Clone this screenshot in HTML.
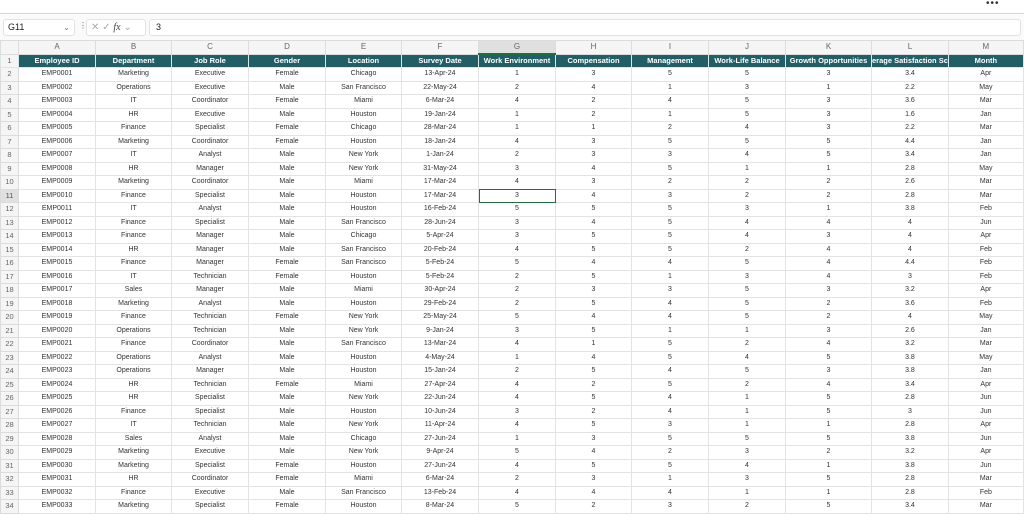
<!DOCTYPE html>
<html><head><meta charset="utf-8"><style>
*{margin:0;padding:0;box-sizing:border-box}
body{width:1024px;height:515px;overflow:hidden;background:#fff;font-family:"Liberation Sans",sans-serif;position:relative}
#top{position:absolute;left:0;top:0;width:1024px;height:14px;background:#fff;border-bottom:1px solid #d4d4d4}
#top span{position:absolute;left:986px;top:-2px;font-size:10px;letter-spacing:1px;color:#333}
#fb{position:absolute;left:0;top:15px;width:1024px;height:25px;background:#fafafa}
.nb{position:absolute;left:3px;top:4px;width:72px;height:17px;background:#fff;border:1px solid #e2e2e2;border-radius:3px;font-size:9px;line-height:15px;padding-left:4px;color:#222}
.nb i{position:absolute;right:4px;top:0;font-style:normal;color:#777;font-size:8px}
.fx{position:absolute;left:86px;top:4px;width:60px;height:17px;background:#fff;border:1px solid #e2e2e2;border-radius:3px;font-size:10px;color:#aaa;line-height:15px;padding-left:4px}
.fx b{font-family:"Liberation Serif",serif;font-style:italic;color:#444;font-weight:normal}
.fi{position:absolute;left:149px;top:4px;width:872px;height:17px;background:#fff;border:1px solid #e2e2e2;border-radius:3px;font-size:9px;line-height:15px;padding-left:6px;color:#222}
table{position:absolute;left:0;top:40px;border-collapse:collapse;table-layout:fixed}
td{border:1px solid #e3e3e3;font-size:7px;color:#333;text-align:center;white-space:nowrap;overflow:hidden;height:13.5px;padding:0;line-height:12px}
tr.ch td{background:#f5f5f5;color:#666;font-size:8px;height:13px;border-color:#dcdcdc}
tr.ch td.sel{background:#e0e0e0;border-bottom:2px solid #1f6f3f}
td.rn{background:#f5f5f5;color:#666;font-size:7.5px;border-color:#dcdcdc}
td.rs{background:#e0e0e0;color:#1f6f3f}
tr.h td{background:#215e66;color:#fff;font-weight:bold;font-size:7.5px;border-color:#d8e6e6}
tr.h td.rn{background:#f5f5f5;color:#666;font-weight:normal}
td.act{outline:1.5px solid #1f6f3f;outline-offset:-1px}
</style></head><body>
<div id="top"><span>•••</span></div>
<div id="fb"><div class="nb">G11<i>⌄</i></div><div style="position:absolute;left:79px;top:6px;font-size:8px;color:#666">⋮</div><div class="fx">✕ ✓ <b>fx</b> ⌄</div><div class="fi">3</div></div>
<table>
<colgroup><col style="width:18px"><col style="width:77px"><col style="width:76px"><col style="width:77px"><col style="width:77px"><col style="width:76px"><col style="width:77px"><col style="width:77px"><col style="width:76px"><col style="width:77px"><col style="width:77px"><col style="width:86px"><col style="width:76px"><col style="width:75px"></colgroup>
<tr class="ch"><td class="rn"></td><td>A</td><td>B</td><td>C</td><td>D</td><td>E</td><td>F</td><td class="sel">G</td><td>H</td><td>I</td><td>J</td><td>K</td><td>L</td><td>M</td></tr>
<tr class="h"><td class="rn">1</td><td>Employee ID</td><td>Department</td><td>Job Role</td><td>Gender</td><td>Location</td><td>Survey Date</td><td>Work Environment</td><td>Compensation</td><td>Management</td><td>Work-Life Balance</td><td>Growth Opportunities</td><td style="text-align:right">erage Satisfaction Sc</td><td>Month</td></tr>
<tr><td class="rn">2</td><td>EMP0001</td><td>Marketing</td><td>Executive</td><td>Female</td><td>Chicago</td><td>13-Apr-24</td><td>1</td><td>3</td><td>5</td><td>5</td><td>3</td><td>3.4</td><td>Apr</td></tr>
<tr><td class="rn">3</td><td>EMP0002</td><td>Operations</td><td>Executive</td><td>Male</td><td>San Francisco</td><td>22-May-24</td><td>2</td><td>4</td><td>1</td><td>3</td><td>1</td><td>2.2</td><td>May</td></tr>
<tr><td class="rn">4</td><td>EMP0003</td><td>IT</td><td>Coordinator</td><td>Female</td><td>Miami</td><td>6-Mar-24</td><td>4</td><td>2</td><td>4</td><td>5</td><td>3</td><td>3.6</td><td>Mar</td></tr>
<tr><td class="rn">5</td><td>EMP0004</td><td>HR</td><td>Executive</td><td>Male</td><td>Houston</td><td>19-Jan-24</td><td>1</td><td>2</td><td>1</td><td>5</td><td>3</td><td>1.6</td><td>Jan</td></tr>
<tr><td class="rn">6</td><td>EMP0005</td><td>Finance</td><td>Specialist</td><td>Female</td><td>Chicago</td><td>28-Mar-24</td><td>1</td><td>1</td><td>2</td><td>4</td><td>3</td><td>2.2</td><td>Mar</td></tr>
<tr><td class="rn">7</td><td>EMP0006</td><td>Marketing</td><td>Coordinator</td><td>Female</td><td>Houston</td><td>18-Jan-24</td><td>4</td><td>3</td><td>5</td><td>5</td><td>5</td><td>4.4</td><td>Jan</td></tr>
<tr><td class="rn">8</td><td>EMP0007</td><td>IT</td><td>Analyst</td><td>Male</td><td>New York</td><td>1-Jan-24</td><td>2</td><td>3</td><td>3</td><td>4</td><td>5</td><td>3.4</td><td>Jan</td></tr>
<tr><td class="rn">9</td><td>EMP0008</td><td>HR</td><td>Manager</td><td>Male</td><td>New York</td><td>31-May-24</td><td>3</td><td>4</td><td>5</td><td>1</td><td>1</td><td>2.8</td><td>May</td></tr>
<tr><td class="rn">10</td><td>EMP0009</td><td>Marketing</td><td>Coordinator</td><td>Male</td><td>Miami</td><td>17-Mar-24</td><td>4</td><td>3</td><td>2</td><td>2</td><td>2</td><td>2.6</td><td>Mar</td></tr>
<tr><td class="rn rs">11</td><td>EMP0010</td><td>Finance</td><td>Specialist</td><td>Male</td><td>Houston</td><td>17-Mar-24</td><td class="act">3</td><td>4</td><td>3</td><td>2</td><td>2</td><td>2.8</td><td>Mar</td></tr>
<tr><td class="rn">12</td><td>EMP0011</td><td>IT</td><td>Analyst</td><td>Male</td><td>Houston</td><td>16-Feb-24</td><td>5</td><td>5</td><td>5</td><td>3</td><td>1</td><td>3.8</td><td>Feb</td></tr>
<tr><td class="rn">13</td><td>EMP0012</td><td>Finance</td><td>Specialist</td><td>Male</td><td>San Francisco</td><td>28-Jun-24</td><td>3</td><td>4</td><td>5</td><td>4</td><td>4</td><td>4</td><td>Jun</td></tr>
<tr><td class="rn">14</td><td>EMP0013</td><td>Finance</td><td>Manager</td><td>Male</td><td>Chicago</td><td>5-Apr-24</td><td>3</td><td>5</td><td>5</td><td>4</td><td>3</td><td>4</td><td>Apr</td></tr>
<tr><td class="rn">15</td><td>EMP0014</td><td>HR</td><td>Manager</td><td>Male</td><td>San Francisco</td><td>20-Feb-24</td><td>4</td><td>5</td><td>5</td><td>2</td><td>4</td><td>4</td><td>Feb</td></tr>
<tr><td class="rn">16</td><td>EMP0015</td><td>Finance</td><td>Manager</td><td>Female</td><td>San Francisco</td><td>5-Feb-24</td><td>5</td><td>4</td><td>4</td><td>5</td><td>4</td><td>4.4</td><td>Feb</td></tr>
<tr><td class="rn">17</td><td>EMP0016</td><td>IT</td><td>Technician</td><td>Female</td><td>Houston</td><td>5-Feb-24</td><td>2</td><td>5</td><td>1</td><td>3</td><td>4</td><td>3</td><td>Feb</td></tr>
<tr><td class="rn">18</td><td>EMP0017</td><td>Sales</td><td>Manager</td><td>Male</td><td>Miami</td><td>30-Apr-24</td><td>2</td><td>3</td><td>3</td><td>5</td><td>3</td><td>3.2</td><td>Apr</td></tr>
<tr><td class="rn">19</td><td>EMP0018</td><td>Marketing</td><td>Analyst</td><td>Male</td><td>Houston</td><td>29-Feb-24</td><td>2</td><td>5</td><td>4</td><td>5</td><td>2</td><td>3.6</td><td>Feb</td></tr>
<tr><td class="rn">20</td><td>EMP0019</td><td>Finance</td><td>Technician</td><td>Female</td><td>New York</td><td>25-May-24</td><td>5</td><td>4</td><td>4</td><td>5</td><td>2</td><td>4</td><td>May</td></tr>
<tr><td class="rn">21</td><td>EMP0020</td><td>Operations</td><td>Technician</td><td>Male</td><td>New York</td><td>9-Jan-24</td><td>3</td><td>5</td><td>1</td><td>1</td><td>3</td><td>2.6</td><td>Jan</td></tr>
<tr><td class="rn">22</td><td>EMP0021</td><td>Finance</td><td>Coordinator</td><td>Male</td><td>San Francisco</td><td>13-Mar-24</td><td>4</td><td>1</td><td>5</td><td>2</td><td>4</td><td>3.2</td><td>Mar</td></tr>
<tr><td class="rn">23</td><td>EMP0022</td><td>Operations</td><td>Analyst</td><td>Male</td><td>Houston</td><td>4-May-24</td><td>1</td><td>4</td><td>5</td><td>4</td><td>5</td><td>3.8</td><td>May</td></tr>
<tr><td class="rn">24</td><td>EMP0023</td><td>Operations</td><td>Manager</td><td>Male</td><td>Houston</td><td>15-Jan-24</td><td>2</td><td>5</td><td>4</td><td>5</td><td>3</td><td>3.8</td><td>Jan</td></tr>
<tr><td class="rn">25</td><td>EMP0024</td><td>HR</td><td>Technician</td><td>Female</td><td>Miami</td><td>27-Apr-24</td><td>4</td><td>2</td><td>5</td><td>2</td><td>4</td><td>3.4</td><td>Apr</td></tr>
<tr><td class="rn">26</td><td>EMP0025</td><td>HR</td><td>Specialist</td><td>Male</td><td>New York</td><td>22-Jun-24</td><td>4</td><td>5</td><td>4</td><td>1</td><td>5</td><td>2.8</td><td>Jun</td></tr>
<tr><td class="rn">27</td><td>EMP0026</td><td>Finance</td><td>Specialist</td><td>Male</td><td>Houston</td><td>10-Jun-24</td><td>3</td><td>2</td><td>4</td><td>1</td><td>5</td><td>3</td><td>Jun</td></tr>
<tr><td class="rn">28</td><td>EMP0027</td><td>IT</td><td>Technician</td><td>Male</td><td>New York</td><td>11-Apr-24</td><td>4</td><td>5</td><td>3</td><td>1</td><td>1</td><td>2.8</td><td>Apr</td></tr>
<tr><td class="rn">29</td><td>EMP0028</td><td>Sales</td><td>Analyst</td><td>Male</td><td>Chicago</td><td>27-Jun-24</td><td>1</td><td>3</td><td>5</td><td>5</td><td>5</td><td>3.8</td><td>Jun</td></tr>
<tr><td class="rn">30</td><td>EMP0029</td><td>Marketing</td><td>Executive</td><td>Male</td><td>New York</td><td>9-Apr-24</td><td>5</td><td>4</td><td>2</td><td>3</td><td>2</td><td>3.2</td><td>Apr</td></tr>
<tr><td class="rn">31</td><td>EMP0030</td><td>Marketing</td><td>Specialist</td><td>Female</td><td>Houston</td><td>27-Jun-24</td><td>4</td><td>5</td><td>5</td><td>4</td><td>1</td><td>3.8</td><td>Jun</td></tr>
<tr><td class="rn">32</td><td>EMP0031</td><td>HR</td><td>Coordinator</td><td>Female</td><td>Miami</td><td>6-Mar-24</td><td>2</td><td>3</td><td>1</td><td>3</td><td>5</td><td>2.8</td><td>Mar</td></tr>
<tr><td class="rn">33</td><td>EMP0032</td><td>Finance</td><td>Executive</td><td>Male</td><td>San Francisco</td><td>13-Feb-24</td><td>4</td><td>4</td><td>4</td><td>1</td><td>1</td><td>2.8</td><td>Feb</td></tr>
<tr><td class="rn">34</td><td>EMP0033</td><td>Marketing</td><td>Specialist</td><td>Female</td><td>Houston</td><td>8-Mar-24</td><td>5</td><td>2</td><td>3</td><td>2</td><td>5</td><td>3.4</td><td>Mar</td></tr>
</table>
</body></html>
